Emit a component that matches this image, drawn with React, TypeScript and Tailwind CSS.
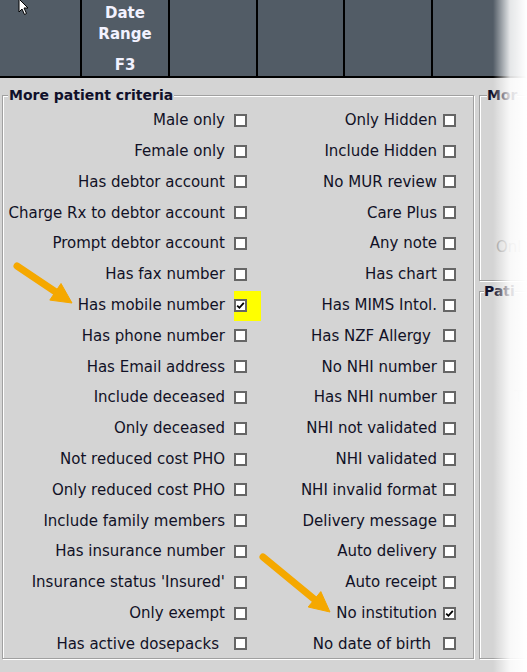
import React from 'react';

const leftRows = [
    { label: 'Male only' },
    { label: 'Female only' },
    { label: 'Has debtor account' },
    { label: 'Charge Rx to debtor account' },
    { label: 'Prompt debtor account' },
    { label: 'Has fax number' },
    { label: 'Has mobile number', checked: true, highlight: true },
    { label: 'Has phone number' },
    { label: 'Has Email address' },
    { label: 'Include deceased' },
    { label: 'Only deceased' },
    { label: 'Not reduced cost PHO' },
    { label: 'Only reduced cost PHO' },
    { label: 'Include family members' },
    { label: 'Has insurance number' },
    { label: "Insurance status 'Insured'" },
    { label: 'Only exempt' },
    { label: 'Has active dosepacks', pad: true },
];

const rightRows = [
    { label: 'Only Hidden' },
    { label: 'Include Hidden' },
    { label: 'No MUR review' },
    { label: 'Care Plus' },
    { label: 'Any note' },
    { label: 'Has chart' },
    { label: 'Has MIMS Intol.' },
    { label: 'Has NZF Allergy', pad: true },
    { label: 'No NHI number' },
    { label: 'Has NHI number' },
    { label: 'NHI not validated' },
    { label: 'NHI validated' },
    { label: 'NHI invalid format' },
    { label: 'Delivery message' },
    { label: 'Auto delivery' },
    { label: 'Auto receipt' },
    { label: 'No institution', checked: true },
    { label: 'No date of birth', pad: true },
];

type Row = { label: string; checked?: boolean; highlight?: boolean; pad?: boolean };

function CheckBox({ checked, highlight }: { checked?: boolean; highlight?: boolean }) {
    return (
        <span className="relative flex shrink-0">
            {highlight && <span className="absolute left-0 top-[-8px] w-[27px] h-[30px] bg-[#ffff00]" />}
            <span className="relative flex items-center justify-center w-[13px] h-[13px] border-2 border-[#666] bg-white">
                {checked && (
                    <svg viewBox="0 0 9 9" className="w-[9px] h-[9px]">
                        <path d="M1.2 4.6 L3.4 6.8 L7.8 1.8" fill="none" stroke="#000" strokeWidth="1.8" />
                    </svg>
                )}
            </span>
        </span>
    );
}

function Column({ rows, width, gap }: { rows: Row[]; width: string; gap: string }) {
    return (
        <div className={`flex shrink-0 flex-col ${width}`}>
            {rows.map((row) => (
                <div key={row.label} className={`flex h-[30.8px] items-center justify-end ${gap}`}>
                    <span className={`whitespace-nowrap ${row.pad ? 'pr-[6px]' : ''}`}>{row.label}</span>
                    <CheckBox checked={row.checked} highlight={row.highlight} />
                </div>
            ))}
        </div>
    );
}

export default function App() {
    return (
        <div className="relative w-[527px] h-[672px] overflow-hidden bg-[#d4d4d4] text-[15px] text-[#111126] font-['DejaVu_Sans',sans-serif]">
            {/* Function key bar */}
            <div className="flex h-[78px] bg-[#525c66] border-b-2 border-black">
                <div className="w-[82px] shrink-0 border-r-2 border-black" />
                <div className="flex w-[88px] shrink-0 flex-col items-center border-r-2 border-black pt-[3px] text-[15px] font-bold leading-[21px] text-[#f2f2ff]">
                    <span>Date</span>
                    <span>Range</span>
                    <span className="mt-auto">F3</span>
                </div>
                <div className="w-[88px] shrink-0 border-r-2 border-black" />
                <div className="w-[87px] shrink-0 border-r-2 border-black" />
                <div className="w-[88px] shrink-0 border-r-2 border-black" />
                <div className="flex-1" />
            </div>

            <div className="flex gap-[5px] pl-[2px] pt-[9px]">
                <fieldset className="w-[472px] h-[572px] shrink-0 border border-[#a0a0a0] shadow-[inset_1px_1px_0_#fff,1px_1px_0_#fff]">
                    <legend className="ml-[5px] px-[1px] bg-[#d4d4d4] text-[14px] font-bold leading-[17px] text-[#10102a]">
                        More patient criteria
                    </legend>
                    <div className="flex pt-[1px]">
                        <Column rows={leftRows} width="w-[244px]" gap="gap-[9px]" />
                        <Column rows={rightRows} width="w-[209px]" gap="gap-[6px]" />
                    </div>
                </fieldset>

                {/* Neighbouring panels, cut off at the torn edge */}
                <div className="flex w-[80px] shrink-0 flex-col gap-[2px]">
                    <fieldset className="h-[194px] border border-[#a0a0a0] shadow-[inset_1px_1px_0_#fff,1px_1px_0_#fff]">
                        <legend className="ml-[7px] bg-[#d4d4d4] text-[14px] font-bold leading-[17px] text-[#10102a]">Mor</legend>
                        <div className="pl-[16px] pt-[132px] text-[#9a9a9a]">Onl</div>
                    </fieldset>
                    <fieldset className="h-[376px] border border-[#a0a0a0] shadow-[inset_1px_1px_0_#fff,1px_1px_0_#fff]">
                        <legend className="ml-[4px] bg-[#d4d4d4] text-[14px] font-bold leading-[17px] text-[#10102a]">Pati</legend>
                        <div className="pl-[34px] pt-[86px] text-[#c4c4c4]">T</div>
                    </fieldset>
                </div>
            </div>

            {/* Annotation arrows */}
            <svg className="absolute left-0 top-0 pointer-events-none" width="527" height="672">
                <g fill="#f5a800" stroke="#f5a800">
                    <line x1="17" y1="266" x2="58" y2="293.5" strokeWidth="7" strokeLinecap="round" />
                    <polygon points="72,303 49.8,300.1 61,283.5" strokeWidth="1" strokeLinejoin="round" />
                    <line x1="263" y1="557" x2="317" y2="601.5" strokeWidth="7" strokeLinecap="round" />
                    <polygon points="330,612 308.2,607 320.8,591.6" strokeWidth="1" strokeLinejoin="round" />
                </g>
            </svg>

            {/* Mouse cursor */}
            <svg className="absolute left-[18px] top-[-2px]" width="13" height="18" viewBox="0 0 13 18">
                <path d="M1 1 L1 14 L4 11 L6.5 16.5 L8.5 15.5 L6 10 L10 10 Z" fill="#fff" stroke="#000" strokeWidth="1" strokeLinejoin="round" />
            </svg>

            {/* Torn edge fade */}
            <div className="absolute right-0 top-0 h-full w-[34px] bg-gradient-to-r from-transparent via-white/85 to-white" />
        </div>
    );
}
